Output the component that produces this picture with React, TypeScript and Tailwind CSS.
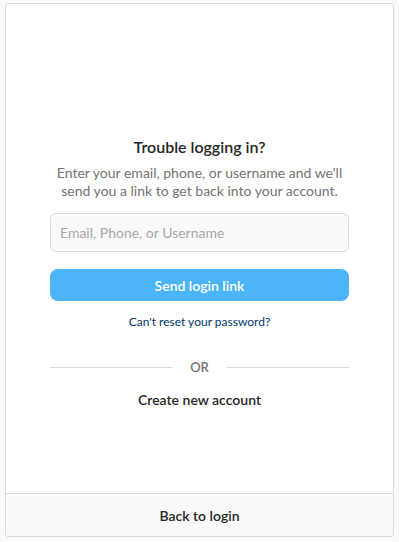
export default function App() {
  return (
    <div
      className="flex h-[542px] w-full bg-[#fafafa] px-[5px] pb-[5px] pt-[3px]"
      style={{ fontFamily: 'Lato, "Noto Sans", sans-serif' }}
    >
      <div className="flex w-full flex-col overflow-hidden rounded-[3px] border border-[#dbdbdb] bg-white">
        <div className="flex flex-1 flex-col items-center px-11 pt-[133px]">
          <h2 className="text-[16px] font-semibold leading-[20px] text-[#262626]">
            Trouble logging in?
          </h2>
          <p className="mt-[7px] text-center text-[14px] leading-[18px] text-[#737373]">
            Enter your email, phone, or username and we'll send you a link to get back into your account.
          </p>
          <input
            placeholder="Email, Phone, or Username"
            className="mt-[13px] h-[39px] w-full rounded-[6px] border border-[#dbdbdb] bg-[#fafafa] px-[9px] text-[14px] text-[#262626] outline-none placeholder:text-[#a8a8a8]"
          />
          <button className="mt-[17px] h-[32px] w-full rounded-[8px] bg-[#4cb5f9] text-[14px] font-semibold text-white">
            Send login link
          </button>
          <a className="mt-[13px] text-[12px] leading-[16px] text-[#00376b]">
            Can't reset your password?
          </a>
          <div className="mt-[30px] flex w-full items-center">
            <div className="h-px flex-1 bg-[#dbdbdb]" />
            <div className="mx-[18px] text-[13px] font-semibold leading-[15px] text-[#737373]">OR</div>
            <div className="h-px flex-1 bg-[#dbdbdb]" />
          </div>
          <a className="mt-[16px] text-[14px] font-semibold leading-[18px] text-[#262626]">
            Create new account
          </a>
        </div>
        <div className="flex h-[43px] items-center justify-center border-t border-[#dbdbdb] bg-[#fafafa]">
          <span className="text-[14px] font-semibold text-[#262626]">Back to login</span>
        </div>
      </div>
    </div>
  )
}
